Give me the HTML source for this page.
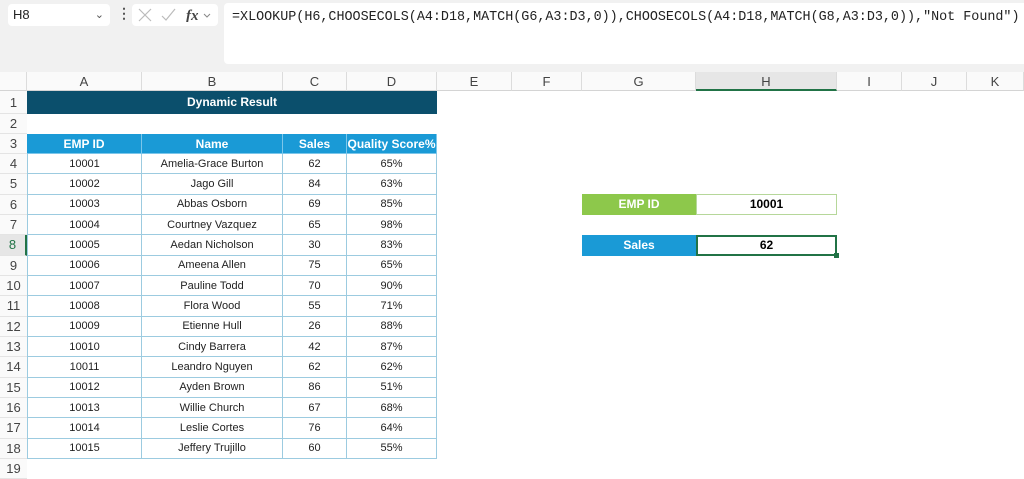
<!DOCTYPE html>
<html><head><meta charset="utf-8"><style>
*{margin:0;padding:0;box-sizing:border-box}
body{width:1024px;height:468px;overflow:hidden;background:#fff;font-family:"Liberation Sans",sans-serif;position:relative}
.a{position:absolute}
.top{left:0;top:0;width:1024px;height:72px;background:#f1f1f1}
.box{background:#fff;border-radius:4px}
.ch{top:72px;height:19px;font-size:13px;color:#444;text-align:center;line-height:19px;border-right:1px solid #dcdcdc;border-bottom:1px solid #d4d4d4;background:#fafafa}
.rh{left:0;width:27px;font-size:13px;color:#444;text-align:center;background:#fafafa;border-bottom:1px solid #e4e4e4}
.c{font-size:11px;color:#222;text-align:center;border-right:1px solid #9ccbe0;border-bottom:1px solid #9ccbe0;display:flex;align-items:center;justify-content:center}
.h{background:#1a9ad6;color:#fff;font-weight:bold;font-size:12px;border-color:#7cc6ea}
</style></head><body>
<div class="a top"></div>
<div class="a box" style="left:8px;top:4px;width:102px;height:22px;font-size:13px;line-height:22px;padding-left:5px;color:#222">H8<span style="position:absolute;right:6px;top:0;color:#555;font-size:11px">&#8964;</span></div>
<div class="a" style="left:117px;top:5px;font-size:14px;color:#555;font-weight:bold">&#8942;</div>
<div class="a box" style="left:132px;top:4px;width:86px;height:22px"></div>
<svg class="a" style="left:136px;top:8px" width="80" height="14"><path d="M3 1l12 12M15 1L3 13" stroke="#bbb" stroke-width="1.2"/><path d="M26 8l4 4 9-11" stroke="#bbb" stroke-width="1.2" fill="none"/><text x="50" y="12" font-family="Liberation Serif" font-style="italic" font-weight="bold" font-size="15" fill="#444">fx</text><path d="M68 6l3 3 3-3" stroke="#888" fill="none"/></svg>
<div class="a box" style="left:224px;top:3px;width:800px;height:61px;border-radius:4px 0 0 4px;font-family:'Liberation Mono',monospace;font-size:13.4px;color:#222;padding:7px 0 0 8px;white-space:nowrap;overflow:hidden">=XLOOKUP(H6,CHOOSECOLS(A4:D18,MATCH(G6,A3:D3,0)),CHOOSECOLS(A4:D18,MATCH(G8,A3:D3,0)),"Not Found")</div>
<div class="a" style="left:0;top:72px;width:27px;height:19px;background:#fafafa;border-right:1px solid #dcdcdc;border-bottom:1px solid #d4d4d4"></div>
<div class="a ch" style="left:27px;width:115px">A</div>
<div class="a ch" style="left:142px;width:141px">B</div>
<div class="a ch" style="left:283px;width:64px">C</div>
<div class="a ch" style="left:347px;width:90px">D</div>
<div class="a ch" style="left:437px;width:75px">E</div>
<div class="a ch" style="left:512px;width:70px">F</div>
<div class="a ch" style="left:582px;width:114px">G</div>
<div class="a ch" style="left:696px;width:141px;background:#e6e6e6;border-bottom:2px solid #217346">H</div>
<div class="a ch" style="left:837px;width:65px">I</div>
<div class="a ch" style="left:902px;width:65px">J</div>
<div class="a ch" style="left:967px;width:57px">K</div>
<div id="rows"></div>
<div class="a" style="left:27px;top:91px;width:410px;height:23px;background:#0b4f6c;color:#fff;font-weight:bold;font-size:12px;text-align:center;line-height:23px">Dynamic Result</div>
<div class="a" style="left:582px;top:194px;width:114px;height:21px;background:#8dc84b;color:#fff;font-weight:bold;font-size:12px;text-align:center;line-height:21px">EMP ID</div>
<div class="a" style="left:696px;top:194px;width:141px;height:21px;border:1px solid #b6d79a;font-weight:bold;font-size:12px;text-align:center;line-height:19px">10001</div>
<div class="a" style="left:582px;top:235px;width:114px;height:21px;background:#1a9ad6;color:#fff;font-weight:bold;font-size:12px;text-align:center;line-height:21px">Sales</div>
<div class="a" style="left:696px;top:235px;width:141px;height:21px;border:2px solid #217346;font-weight:bold;font-size:12px;text-align:center;line-height:17px">62</div>
<div class="a" style="left:834px;top:253px;width:5px;height:5px;background:#217346"></div>
<script>
var d=[["10001","Amelia-Grace Burton",62,"65%"],["10002","Jago Gill",84,"63%"],["10003","Abbas Osborn",69,"85%"],["10004","Courtney Vazquez",65,"98%"],["10005","Aedan Nicholson",30,"83%"],["10006","Ameena Allen",75,"65%"],["10007","Pauline Todd",70,"90%"],["10008","Flora Wood",55,"71%"],["10009","Etienne Hull",26,"88%"],["10010","Cindy Barrera",42,"87%"],["10011","Leandro Nguyen",62,"62%"],["10012","Ayden Brown",86,"51%"],["10013","Willie Church",67,"68%"],["10014","Leslie Cortes",76,"64%"],["10015","Jeffery Trujillo",60,"55%"]];
var h="",tops=[91,114,134],hs=[23,20,20];
for(var i=0;i<16;i++){tops.push(154+i*20.33);hs.push(20.33);}
for(var r=0;r<19;r++){var t=tops[r],hh=hs[r];var bg=(r==7)?"background:#e6e6e6;color:#217346;border-right:2px solid #217346":"";
h+='<div class="a rh" style="top:'+t+'px;height:'+hh+'px;line-height:'+hh+'px;'+bg+'">'+(r+1)+'</div>';}
var L=[27,142,283,347],W=[115,141,64,90];
var H=["EMP ID","Name","Sales","Quality Score%"];
for(var j=0;j<4;j++)h+='<div class="a c h" style="left:'+L[j]+'px;top:134px;width:'+W[j]+'px;height:20px">'+H[j]+'</div>';
for(var i=0;i<15;i++)for(var j=0;j<4;j++)h+='<div class="a c" style="left:'+L[j]+'px;top:'+(154+i*20.33)+'px;width:'+W[j]+'px;height:20.33px;'+(j==0?'border-left:1px solid #9ccbe0':'')+'">'+d[i][j]+'</div>';
document.getElementById("rows").innerHTML=h;
</script>
</body></html>
